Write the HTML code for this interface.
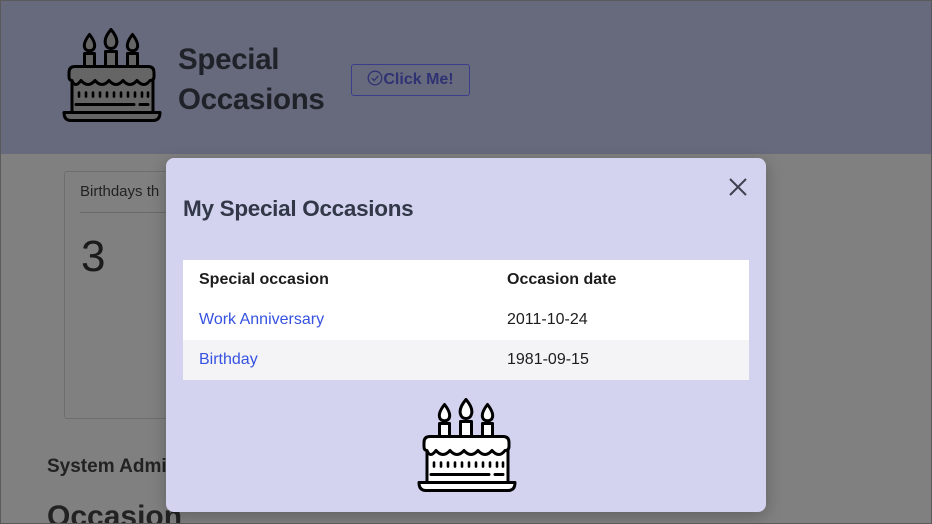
<!DOCTYPE html>
<html><head><meta charset="utf-8"><style>
*{margin:0;padding:0;box-sizing:border-box}
html,body{width:932px;height:524px;overflow:hidden}
body{background:#808080;font-family:"Liberation Sans",sans-serif;position:relative}
.frame{position:absolute;left:0;top:0;width:932px;height:524px;border:1px solid #5a5a5a;z-index:9;pointer-events:none}
.hdr{position:absolute;left:0;top:0;width:932px;height:154px;background:#676a7d}
.title{position:absolute;left:178px;top:40px;font-size:29.5px;font-weight:bold;color:#202229;line-height:40px;letter-spacing:-0.3px}
.btn{position:absolute;left:351px;top:64px;width:119px;height:32px;border:1px solid #3b3d8a;border-radius:3px;color:#2f3272;font-weight:bold;font-size:16px;line-height:30px;text-align:center}
.card{position:absolute;left:64px;top:171px;width:130px;height:248px;border:1px solid #6e6e6e;border-radius:3px;background:#808080}
.card .h{position:absolute;left:15px;top:11px;font-size:15px;color:#222;white-space:nowrap}
.card .ln{position:absolute;left:15px;top:40px;width:120px;border-top:1px solid #6a6a6a}
.card .n{position:absolute;left:16px;top:60px;font-size:44px;font-weight:300;color:#1b1b1b}
.sa{position:absolute;left:47px;top:456px;font-size:19px;font-weight:bold;color:#222;white-space:nowrap}
.oc{position:absolute;left:47px;top:500px;font-size:30px;font-weight:bold;color:#222;white-space:nowrap}
.modal{position:absolute;left:166px;top:158px;width:600px;height:354px;background:#d3d3ef;border-radius:8px;box-shadow:0 4px 16px rgba(0,0,0,.25)}
.modal h2{position:absolute;left:17px;top:38px;font-size:22.5px;font-weight:bold;color:#323848;letter-spacing:-0.3px}
.x{position:absolute;left:562px;top:19px}
table{position:absolute;left:17px;top:102px;width:566px;border-collapse:collapse;font-size:16px}
td,th{height:40px;padding-left:16px;text-align:left;vertical-align:middle}
th{font-weight:bold;color:#1c1c1c;background:#fff}
tr.a td{background:#fff}tr.b td{background:#f4f4f7}
td a{color:#3552e0;text-decoration:none}
td.d{color:#1c1c1c;padding-left:16px}
</style></head><body>
<div class="frame"></div>
<svg width="0" height="0" style="position:absolute"><defs>
<g id="cake" stroke="#000" stroke-width="3" stroke-linejoin="round" stroke-linecap="round">
<path d="M27.5 6 C22 13 21.5 17 23 20 C25 23 30 23 32 20 C33.5 17 33 13 27.5 6Z"/>
<path d="M49 1 C43 8 42 13 44 17 C46 21 52 21 54 17 C56 13 55 8 49 1Z"/>
<path d="M70.5 6 C65 13 64.5 17 66 20 C68 23 73 23 75 20 C76.5 17 76 13 70.5 6Z"/>
<rect x="22.5" y="25" width="10" height="13"/><rect x="43.5" y="23" width="11" height="15"/><rect x="65.5" y="25" width="10" height="13"/>
<path d="M10 52 V84 H91 V52"/>
<path d="M13 38 H86 Q92 38 92 44 V48 Q92 52 88 52 Q82 60 75 52 Q68 60 61 52 Q54 60 47 52 Q40 60 33 52 Q26 60 19 52 Q13 60 10 52 Q7 52 7 48 V44 Q7 38 13 38Z"/>
<path d="M17 64v4M24 64v4M31 64v4M38 64v4M45 64v4M52 64v4M59 64v4M66 64v4M73 64v4M80 64v4M86 64v4" stroke-width="2.6"/>
<path d="M14 76 H72 M78 76 H86" fill="none"/>
<path d="M2 84 H98 Q98 92 91 92 H9 Q2 92 2 84Z"/>
</g></defs></svg>
<div class="hdr">
<svg style="position:absolute;left:62px;top:28px" width="100" height="95" viewBox="0 0 100 94" fill="#656565"><use href="#cake"/></svg>
<div class="title">Special<br>Occasions</div>
<div class="btn"><svg width="16" height="16" viewBox="0 0 16 16" style="vertical-align:-2px"><circle cx="8" cy="8" r="6.8" fill="none" stroke="#2f3272" stroke-width="1.3"/><path d="M4.8 8.2 L7.2 10.5 L11.3 5.8" fill="none" stroke="#2f3272" stroke-width="1.3"/></svg>Click Me!</div>
</div>
<div class="card"><div class="h">Birthdays th</div><div class="ln"></div><div class="n">3</div></div>
<div class="sa">System Admin</div>
<div class="oc">Occasion</div>
<div class="modal">
<h2>My Special Occasions</h2>
<svg class="x" width="20" height="20" viewBox="0 0 20 20"><path d="M2 2L18 18M18 2L2 18" stroke="#3e4250" stroke-width="2"/></svg>
<table>
<tr><th style="width:308px">Special occasion</th><th>Occasion date</th></tr>
<tr class="a"><td><a>Work Anniversary</a></td><td class="d">2011-10-24</td></tr>
<tr class="b"><td><a>Birthday</a></td><td class="d">1981-09-15</td></tr>
</table>
<svg style="position:absolute;left:251px;top:240px" width="100" height="95" viewBox="0 0 100 94" fill="#fff"><use href="#cake"/></svg>
</div>
</body></html>
